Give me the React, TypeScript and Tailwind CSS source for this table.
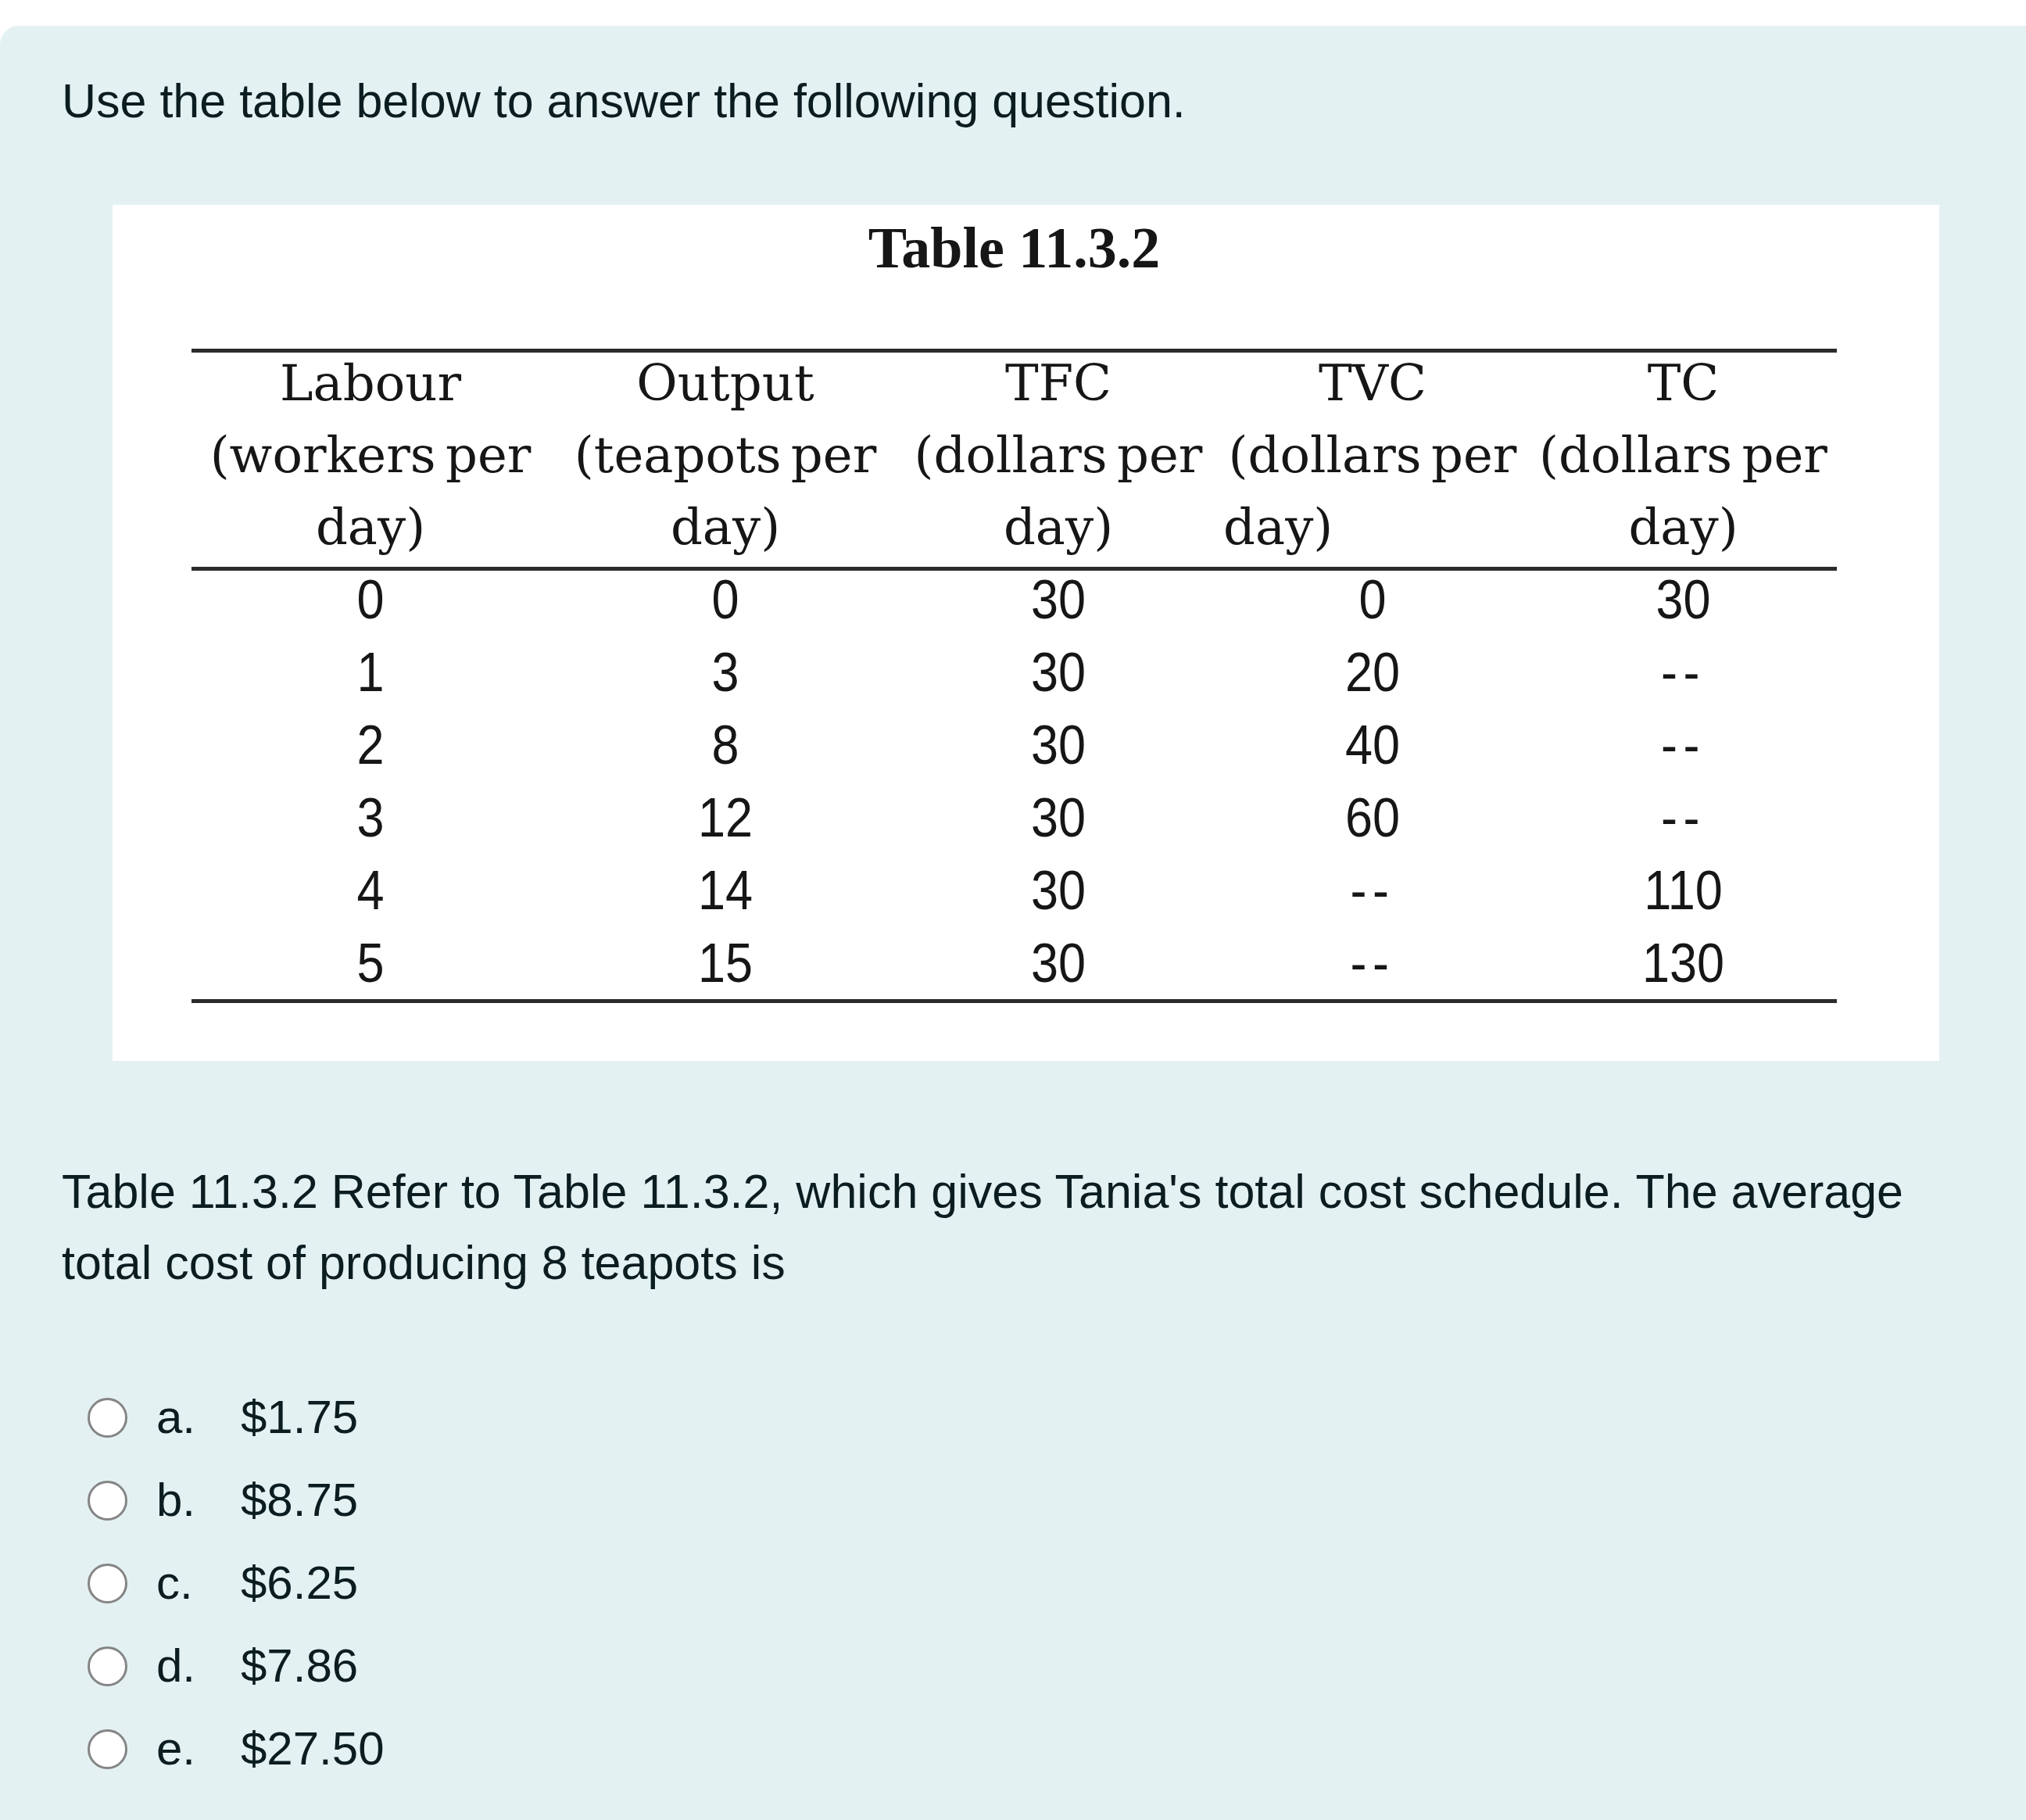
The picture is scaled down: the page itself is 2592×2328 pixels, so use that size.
const header = [
  { top: "Labour", mid: "(workers per", end: "day)" },
  { top: "Output", mid: "(teapots per", end: "day)" },
  { top: "TFC", mid: "(dollars per", end: "day)" },
  { top: "TVC", mid: "(dollars per", end: "day)", left: true },
  { top: "TC", mid: "(dollars per", end: "day)" },
];

const rows = [
  ["0", "0", "30", "0", "30"],
  ["1", "3", "30", "20", "--"],
  ["2", "8", "30", "40", "--"],
  ["3", "12", "30", "60", "--"],
  ["4", "14", "30", "--", "110"],
  ["5", "15", "30", "--", "130"],
];

const options = [
  { letter: "a.", text: "$1.75" },
  { letter: "b.", text: "$8.75" },
  { letter: "c.", text: "$6.25" },
  { letter: "d.", text: "$7.86" },
  { letter: "e.", text: "$27.50" },
];

function CostTable() {
  return (
    <div className="ml-[65px] mt-[88px] w-[2337px] bg-white pb-[74px] pl-[101px] pt-[12px]">
      <div className="w-[2105px] text-[#161616]">
        {/* Caption */}
        <div className="text-center font-['Liberation_Serif',serif] text-[74px] font-bold leading-[86px]">
          Table 11.3.2
        </div>

        <div className="mt-[86px] h-[5px] bg-[#2b2b2b]" />

        {/* Column headings */}
        <div className="-mt-[7px] grid grid-cols-[458px_450px_402px_402px_393px] whitespace-nowrap text-center font-['DejaVu_Serif',serif] text-[64px] leading-[92px] [word-spacing:-8px]">
          {header.map((h) => (
            <div key={h.top + h.mid} className="flex flex-col">
              <span>{h.top}</span>
              <span>{h.mid}</span>
              <span className={h.left ? "pl-[10px] text-left" : ""}>{h.end}</span>
            </div>
          ))}
        </div>

        <div className="mt-[5px] h-[5px] bg-[#2b2b2b]" />

        {/* Data rows */}
        <div className="-mt-[9px] grid grid-cols-[458px_450px_402px_402px_393px] text-center font-['Liberation_Sans',Arial,sans-serif] text-[70px] leading-[93px]">
          {rows.map((row, i) =>
            row.map((cell, j) => (
              <div
                key={`${i}-${j}`}
                className={cell === "--" ? "scale-x-90 tracking-[0.12em]" : "scale-x-90"}
              >
                {cell}
              </div>
            ))
          )}
        </div>

        <div className="-mt-[1px] h-[5px] bg-[#2b2b2b]" />
      </div>
    </div>
  );
}

export default function App() {
  return (
    <div className="min-h-screen bg-white pt-[33px] font-['Liberation_Sans',Arial,sans-serif] text-[#0b1d21]">
      <div className="rounded-tl-[24px] bg-[#e4f1f3] px-[79px] pb-[39px] pt-[51px]">
        <p className="text-[61px] leading-[90px]">Use the table below to answer the following question.</p>

        <CostTable />

        <p className="mt-[122px] text-[61px] leading-[91px]">
          Table 11.3.2 Refer to Table 11.3.2, which gives Tania's total cost schedule. The average total cost of
          producing 8 teapots is
        </p>

        {/* Answer choices */}
        <div className="mt-[99px] pl-[33px]">
          {options.map((o) => (
            <label key={o.letter} className="flex h-[106px] items-center text-[60px]">
              <span className="h-[51px] w-[51px] shrink-0 rounded-full border-[3px] border-[#858585] bg-white" />
              <span className="ml-[37px] w-[108px]">{o.letter}</span>
              <span>{o.text}</span>
            </label>
          ))}
        </div>
      </div>
    </div>
  );
}
